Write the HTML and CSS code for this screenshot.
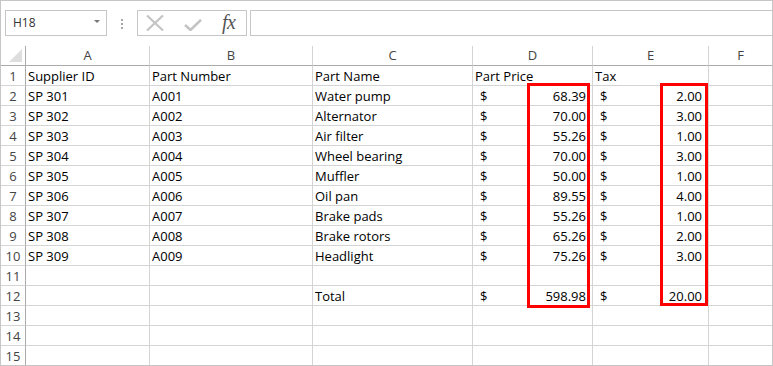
FILE: index.html
```html
<!DOCTYPE html>
<html lang="en">
<head>
  <meta charset="UTF-8" />
  <title>Parts</title>
  <link rel="stylesheet" href="styles.css">
</head>
<body>
  <div class="window">
    <div class="formula-bar">
      <div class="name-box">
        <span>H18</span>
        <span class="caret"></span>
      </div>
      <div class="grip"><i></i><i></i><i></i></div>
      <div class="fx-buttons">
        <svg class="btn-cancel" width="18" height="16" viewBox="0 0 18 16">
          <path d="M1 0.5 L17 15.5 M17 0.5 L1 15.5" stroke="#c4c4c4" stroke-width="2.2" fill="none" />
        </svg>
        <svg class="btn-enter" width="18" height="12" viewBox="0 0 18 12">
          <path d="M1 6 L6.5 11 L17 0.8" stroke="#c4c4c4" stroke-width="2.6" fill="none" />
        </svg>
        <span class="fx">fx</span>
      </div>
      <div class="formula-input"></div>
    </div>

    <div class="sheet">
      <div class="row head">
        <div class="corner"><span class="tri"></span></div>
        <div>A</div><div>B</div><div>C</div><div>D</div><div>E</div><div>F</div>
      </div>
      <div class="row">
        <div class="num">1</div>
        <div>Supplier ID</div><div>Part Number</div><div>Part Name</div><div>Part Price</div><div>Tax</div><div></div>
      </div>
      <div class="row">
        <div class="num">2</div>
        <div>SP 301</div><div>A001</div><div>Water pump</div>
        <div class="money"><span>$</span><span>68.39</span></div>
        <div class="money"><span>$</span><span>2.00</span></div><div></div>
      </div>
      <div class="row">
        <div class="num">3</div>
        <div>SP 302</div><div>A002</div><div>Alternator</div>
        <div class="money"><span>$</span><span>70.00</span></div>
        <div class="money"><span>$</span><span>3.00</span></div><div></div>
      </div>
      <div class="row">
        <div class="num">4</div>
        <div>SP 303</div><div>A003</div><div>Air filter</div>
        <div class="money"><span>$</span><span>55.26</span></div>
        <div class="money"><span>$</span><span>1.00</span></div><div></div>
      </div>
      <div class="row">
        <div class="num">5</div>
        <div>SP 304</div><div>A004</div><div>Wheel bearing</div>
        <div class="money"><span>$</span><span>70.00</span></div>
        <div class="money"><span>$</span><span>3.00</span></div><div></div>
      </div>
      <div class="row">
        <div class="num">6</div>
        <div>SP 305</div><div>A005</div><div>Muffler</div>
        <div class="money"><span>$</span><span>50.00</span></div>
        <div class="money"><span>$</span><span>1.00</span></div><div></div>
      </div>
      <div class="row">
        <div class="num">7</div>
        <div>SP 306</div><div>A006</div><div>Oil pan</div>
        <div class="money"><span>$</span><span>89.55</span></div>
        <div class="money"><span>$</span><span>4.00</span></div><div></div>
      </div>
      <div class="row">
        <div class="num">8</div>
        <div>SP 307</div><div>A007</div><div>Brake pads</div>
        <div class="money"><span>$</span><span>55.26</span></div>
        <div class="money"><span>$</span><span>1.00</span></div><div></div>
      </div>
      <div class="row">
        <div class="num">9</div>
        <div>SP 308</div><div>A008</div><div>Brake rotors</div>
        <div class="money"><span>$</span><span>65.26</span></div>
        <div class="money"><span>$</span><span>2.00</span></div><div></div>
      </div>
      <div class="row">
        <div class="num">10</div>
        <div>SP 309</div><div>A009</div><div>Headlight</div>
        <div class="money"><span>$</span><span>75.26</span></div>
        <div class="money"><span>$</span><span>3.00</span></div><div></div>
      </div>
      <div class="row">
        <div class="num">11</div>
        <div></div><div></div><div></div><div></div><div></div><div></div>
      </div>
      <div class="row">
        <div class="num">12</div>
        <div></div><div></div><div>Total</div>
        <div class="money"><span>$</span><span>598.98</span></div>
        <div class="money"><span>$</span><span>20.00</span></div><div></div>
      </div>
      <div class="row">
        <div class="num">13</div>
        <div></div><div></div><div></div><div></div><div></div><div></div>
      </div>
      <div class="row">
        <div class="num">14</div>
        <div></div><div></div><div></div><div></div><div></div><div></div>
      </div>
      <div class="row">
        <div class="num">15</div>
        <div></div><div></div><div></div><div></div><div></div><div></div>
      </div>

      <div class="highlight price-box"></div>
      <div class="highlight tax-box"></div>
    </div>
  </div>
</body>
</html>
```

FILE: styles.css
```css
body {
  margin: 0;
  font-family: "Open Sans", sans-serif;
  font-size: 13px;
  color: #000;
  background-color: #fff;
}

.window {
  width: 773px;
  height: 366px;
  box-sizing: border-box;
  border: 1px solid #c6c6c6;
  overflow: hidden;
  background-color: #fff;
}

/* formula bar */
.formula-bar {
  display: flex;
  height: 26px;
  margin-top: 9px;
  margin-bottom: 10px;
  padding-left: 4px;
}

.name-box {
  width: 102px;
  box-sizing: border-box;
  border: 1px solid #c6c6c6;
  display: flex;
  align-items: center;
  justify-content: space-between;
  padding: 0 6px 1px 7px;
  font-size: 12px;
  color: #333;
}

.caret {
  width: 0;
  height: 0;
  border-left: 3px solid transparent;
  border-right: 3px solid transparent;
  border-top: 3px solid #777;
  margin-bottom: 2px;
}

.grip {
  width: 30px;
  display: flex;
  flex-direction: column;
  align-items: center;
  justify-content: center;
  gap: 2px;
  padding-top: 1px;
}

.grip i {
  display: block;
  width: 2px;
  height: 2px;
  background-color: #a6a6a6;
}

.fx-buttons {
  width: 110px;
  box-sizing: border-box;
  border: 1px solid #c6c6c6;
  display: flex;
  align-items: center;
  padding-left: 8px;
}

.btn-enter {
  margin-left: 20px;
  margin-top: 3px;
}

.fx {
  margin-left: 20px;
  font-family: "Liberation Serif", serif;
  font-style: italic;
  font-size: 20px;
  color: #555;
  letter-spacing: -0.5px;
  margin-top: -2px;
}

.formula-input {
  flex: 1;
  margin-left: 3px;
  border: 1px solid #c6c6c6;
  border-right: none;
}

/* sheet grid */
.sheet {
  position: relative;
}

.row {
  display: grid;
  grid-template-columns: 25px 124px 163px 160px 120px 116px 1fr;
  height: 20px;
}

.row > div {
  box-sizing: border-box;
  border-right: 1px solid #d4d4d4;
  border-bottom: 1px solid #d4d4d4;
  padding-left: 2px;
  padding-top: 1px;
  line-height: 18px;
  white-space: nowrap;
  overflow: hidden;
}

.row > div:last-child {
  border-right: none;
}

.row > .num,
.row > .corner {
  padding-left: 0;
  text-align: center;
  color: #444;
  border-right-color: #ababab;
}

.head > div {
  border-bottom-color: #ababab;
  text-align: center;
  padding-left: 0;
  padding-top: 0;
  line-height: 19px;
  color: #444;
}

.corner {
  position: relative;
}

.tri {
  position: absolute;
  right: 3px;
  bottom: 3px;
  width: 0;
  height: 0;
  border-left: 13px solid transparent;
  border-bottom: 13px solid #dedede;
}

.money {
  display: flex;
  justify-content: space-between;
  padding: 1px 6px 0 7px !important;
}

.highlight {
  position: absolute;
  top: 37px;
  border: 3px solid #f00;
  box-sizing: border-box;
}

.price-box {
  left: 526px;
  width: 63px;
  height: 225px;
}

.tax-box {
  left: 659px;
  width: 48px;
  height: 223px;
}
```
